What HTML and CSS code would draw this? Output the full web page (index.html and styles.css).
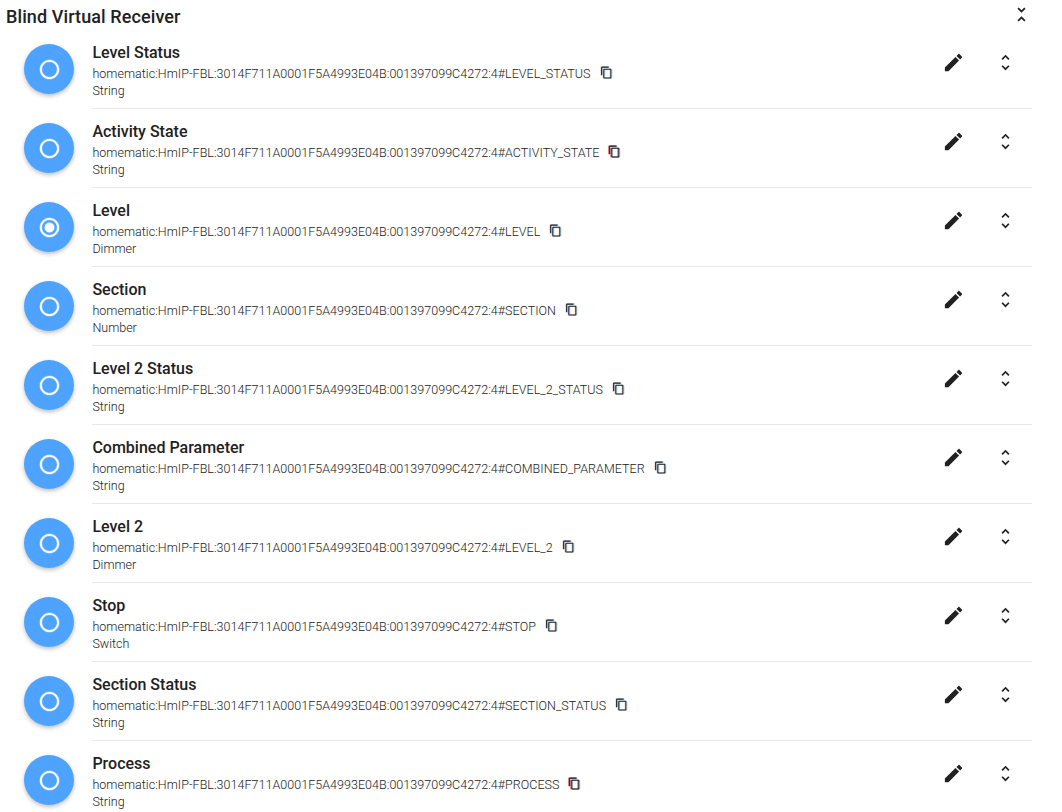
FILE: index.html
```html
<!DOCTYPE html>
<html lang="en">
<head>
<meta charset="utf-8">
<title>Blind Virtual Receiver</title>
<link rel="stylesheet" href="styles.css">
</head>
<body>
<svg class="defs" width="0" height="0" aria-hidden="true">
<symbol id="i-off" viewBox="0 0 24 24"><path d="M12 2C6.48 2 2 6.48 2 12s4.48 10 10 10 10-4.48 10-10S17.52 2 12 2zm0 18c-4.42 0-8-3.58-8-8s3.58-8 8-8 8 3.58 8 8-3.58 8-8 8z"/></symbol>
<symbol id="i-on" viewBox="0 0 24 24"><path d="M12 2C6.48 2 2 6.48 2 12s4.48 10 10 10 10-4.48 10-10S17.52 2 12 2zm0 18c-4.42 0-8-3.58-8-8s3.58-8 8-8 8 3.58 8 8-3.58 8-8 8z"/><path d="M12 7c-2.76 0-5 2.24-5 5s2.24 5 5 5 5-2.24 5-5-2.24-5-5-5z"/></symbol>
<symbol id="i-copy" viewBox="0 0 24 24"><path d="M16 1H4c-1.1 0-2 .9-2 2v14h2V3h12V1zm3 4H8c-1.1 0-2 .9-2 2v14c0 1.1.9 2 2 2h11c1.1 0 2-.9 2-2V7c0-1.1-.9-2-2-2zm0 16H8V7h11v14z"/></symbol>
<symbol id="i-edit" viewBox="0 0 24 24"><path d="M3 17.25V21h3.75L17.81 9.94l-3.75-3.75L3 17.25zM20.71 7.04c.39-.39.39-1.02 0-1.41l-2.34-2.34c-.39-.39-1.02-.39-1.41 0l-1.83 1.83 3.75 3.75 1.83-1.83z"/></symbol>
<symbol id="i-more" viewBox="0 0 24 24"><path d="M12 5.83L15.17 9l1.41-1.41L12 3 7.41 7.59 8.83 9 12 5.83zm0 12.34L8.83 15l-1.41 1.41L12 21l4.59-4.59L15.17 15 12 18.17z"/></symbol>
<symbol id="i-less" viewBox="0 0 24 24"><path d="M7.41 18.59L8.83 20 12 16.83 15.17 20l1.41-1.41L12 14l-4.59 4.59zm9.18-13.18L15.17 4 12 7.17 8.83 4 7.41 5.41 12 10l4.59-4.59z"/></symbol>
</svg>
<main class="page">
<header class="head">
<h1 class="title">Blind Virtual Receiver</h1>
<svg class="collapse"><use href="#i-less"/></svg>
</header>
<ul class="list">
<li class="row"><span class="avatar"><svg class="radio"><use href="#i-off"/></svg></span><div class="body"><div class="name">Level Status</div><div class="id">homematic:HmIP-FBL:3014F711A0001F5A4993E04B:001397099C4272:4#LEVEL_STATUS<svg class="copy"><use href="#i-copy"/></svg></div><div class="type">String</div></div><svg class="edit"><use href="#i-edit"/></svg><svg class="more"><use href="#i-more"/></svg></li>
<li class="row"><span class="avatar"><svg class="radio"><use href="#i-off"/></svg></span><div class="body"><div class="name">Activity State</div><div class="id">homematic:HmIP-FBL:3014F711A0001F5A4993E04B:001397099C4272:4#ACTIVITY_STATE<svg class="copy copy-red"><use href="#i-copy"/></svg></div><div class="type">String</div></div><svg class="edit"><use href="#i-edit"/></svg><svg class="more"><use href="#i-more"/></svg></li>
<li class="row"><span class="avatar"><svg class="radio"><use href="#i-on"/></svg></span><div class="body"><div class="name">Level</div><div class="id">homematic:HmIP-FBL:3014F711A0001F5A4993E04B:001397099C4272:4#LEVEL<svg class="copy"><use href="#i-copy"/></svg></div><div class="type">Dimmer</div></div><svg class="edit"><use href="#i-edit"/></svg><svg class="more"><use href="#i-more"/></svg></li>
<li class="row"><span class="avatar"><svg class="radio"><use href="#i-off"/></svg></span><div class="body"><div class="name">Section</div><div class="id">homematic:HmIP-FBL:3014F711A0001F5A4993E04B:001397099C4272:4#SECTION<svg class="copy"><use href="#i-copy"/></svg></div><div class="type">Number</div></div><svg class="edit"><use href="#i-edit"/></svg><svg class="more"><use href="#i-more"/></svg></li>
<li class="row"><span class="avatar"><svg class="radio"><use href="#i-off"/></svg></span><div class="body"><div class="name">Level 2 Status</div><div class="id">homematic:HmIP-FBL:3014F711A0001F5A4993E04B:001397099C4272:4#LEVEL_2_STATUS<svg class="copy"><use href="#i-copy"/></svg></div><div class="type">String</div></div><svg class="edit"><use href="#i-edit"/></svg><svg class="more"><use href="#i-more"/></svg></li>
<li class="row"><span class="avatar"><svg class="radio"><use href="#i-off"/></svg></span><div class="body"><div class="name">Combined Parameter</div><div class="id">homematic:HmIP-FBL:3014F711A0001F5A4993E04B:001397099C4272:4#COMBINED_PARAMETER<svg class="copy"><use href="#i-copy"/></svg></div><div class="type">String</div></div><svg class="edit"><use href="#i-edit"/></svg><svg class="more"><use href="#i-more"/></svg></li>
<li class="row"><span class="avatar"><svg class="radio"><use href="#i-off"/></svg></span><div class="body"><div class="name">Level 2</div><div class="id">homematic:HmIP-FBL:3014F711A0001F5A4993E04B:001397099C4272:4#LEVEL_2<svg class="copy"><use href="#i-copy"/></svg></div><div class="type">Dimmer</div></div><svg class="edit"><use href="#i-edit"/></svg><svg class="more"><use href="#i-more"/></svg></li>
<li class="row"><span class="avatar"><svg class="radio"><use href="#i-off"/></svg></span><div class="body"><div class="name">Stop</div><div class="id">homematic:HmIP-FBL:3014F711A0001F5A4993E04B:001397099C4272:4#STOP<svg class="copy"><use href="#i-copy"/></svg></div><div class="type">Switch</div></div><svg class="edit"><use href="#i-edit"/></svg><svg class="more"><use href="#i-more"/></svg></li>
<li class="row"><span class="avatar"><svg class="radio"><use href="#i-off"/></svg></span><div class="body"><div class="name">Section Status</div><div class="id">homematic:HmIP-FBL:3014F711A0001F5A4993E04B:001397099C4272:4#SECTION_STATUS<svg class="copy"><use href="#i-copy"/></svg></div><div class="type">String</div></div><svg class="edit"><use href="#i-edit"/></svg><svg class="more"><use href="#i-more"/></svg></li>
<li class="row"><span class="avatar"><svg class="radio"><use href="#i-off"/></svg></span><div class="body"><div class="name">Process</div><div class="id">homematic:HmIP-FBL:3014F711A0001F5A4993E04B:001397099C4272:4#PROCESS<svg class="copy copy-red"><use href="#i-copy"/></svg></div><div class="type">String</div></div><svg class="edit"><use href="#i-edit"/></svg><svg class="more"><use href="#i-more"/></svg></li>
</ul>
</main>
</body>
</html>
```
FILE: styles.css
```css
html, body {
  margin: 0;
  height: 100%;
  overflow: hidden;
  background: #fff;
}
body {
  font-family: Roboto, "Liberation Sans", sans-serif;
  color: #212121;
}
.defs {
  display: block;
  height: 0;
}
.page {
  width: 1062px;
  box-sizing: border-box;
  padding-right: 30px;
}
.head {
  display: flex;
  align-items: center;
  justify-content: space-between;
  height: 30px;
  padding-left: 6px;
}
.title {
  margin: 4px 0 0;
  font-size: 18px;
  font-weight: 500;
  letter-spacing: 0.1px;
  line-height: 26px;
}
.collapse {
  width: 21px;
  height: 21px;
  margin-right: 0;
  margin-top: -2px;
  fill: #212121;
}
.list {
  list-style: none;
  margin: 0;
  padding: 0 0 0 24px;
}
.row {
  position: relative;
  display: flex;
  height: 79px;
}
.avatar {
  flex: none;
  align-self: flex-start;
  width: 50px;
  height: 50px;
  margin: 14px 18px 0 0;
  border-radius: 50%;
  background: #4da3ff;
  box-shadow: 0 2px 4px rgba(0, 0, 0, 0.25);
  display: flex;
  align-items: center;
  justify-content: center;
}
.radio {
  width: 23px;
  height: 23px;
  fill: #fff;
  stroke: #fff;
  stroke-width: 0.4;
}
.body {
  flex: 1;
  box-sizing: border-box;
  padding: 14px 0 0 0.4px;
  border-bottom: 1px solid #e8e8e8;
}
.name {
  font-size: 16px;
  font-weight: 500;
  line-height: 18px;
}
.id {
  display: flex;
  align-items: center;
  font-size: 12.5px;
  font-weight: 300;
  letter-spacing: 0.035px;
  line-height: 20px;
  margin-top: 2px;
}
.type {
  font-size: 12.5px;
  font-weight: 300;
  line-height: 16px;
  margin-top: -1px;
}
.copy {
  width: 13px;
  height: 13px;
  margin-left: 9px;
  margin-top: -4px;
  fill: #1c2430;
  filter: drop-shadow(1px 0 0 rgba(30, 130, 230, 0.35)) drop-shadow(-1px 0 0 rgba(225, 150, 60, 0.3));
}
.copy-red {
  filter: drop-shadow(1px 0 0 rgba(30, 130, 230, 0.25)) drop-shadow(-1px 0 0 rgba(200, 30, 20, 0.6));
}
.edit {
  position: absolute;
  left: 918px;
  top: 21px;
  width: 23px;
  height: 23px;
  fill: #212121;
}
.more {
  position: absolute;
  left: 971px;
  top: 22px;
  width: 21px;
  height: 21px;
  fill: #212121;
}
```
